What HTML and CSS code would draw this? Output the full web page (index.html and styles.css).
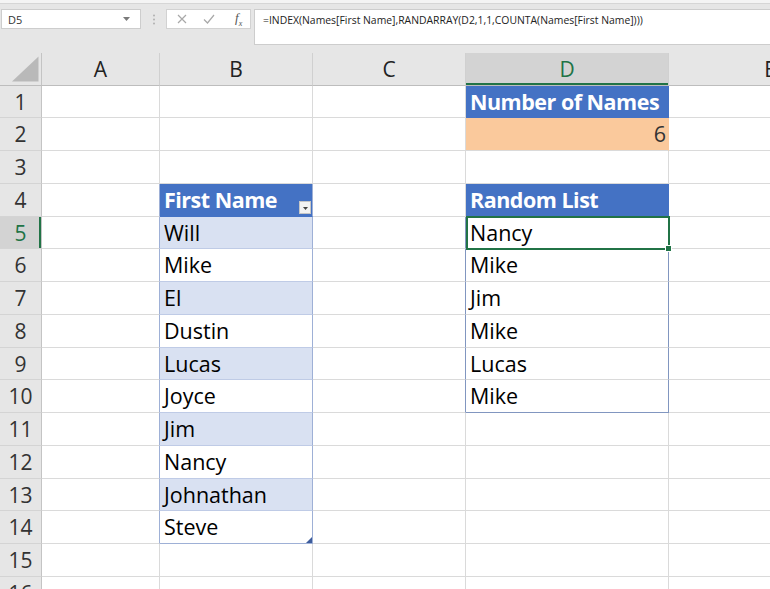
FILE: index.html
```html
<!DOCTYPE html>
<html>
<head>
<meta charset="utf-8">
<link rel="stylesheet" href="styles.css">
</head>
<body>
<div class="topbar">
  <div class="namebox"><span>D5</span><svg width="7" height="4" viewBox="0 0 7 4"><path d="M0 0H7L3.5 4Z" fill="#7a7a7a"/></svg></div>
  <div class="dots"><svg width="4" height="11" viewBox="0 0 4 11"><circle cx="2" cy="1.5" r="1" fill="#b0b0b0"/><circle cx="2" cy="5.5" r="1" fill="#b0b0b0"/><circle cx="2" cy="9.5" r="1" fill="#b0b0b0"/></svg></div>
  <div class="fbtns">
    <svg class="ico" width="10" height="10" viewBox="0 0 10 10"><path d="M1 1L9 9M9 1L1 9" stroke="#a8a8a8" stroke-width="1.2" fill="none"/></svg>
    <svg class="ico" width="12" height="10" viewBox="0 0 12 10"><path d="M1 5.5L4.5 9L11 1" stroke="#a8a8a8" stroke-width="1.2" fill="none"/></svg>
    <span class="fx"><i>f</i><sub>x</sub></span>
  </div>
  <div class="formula">=INDEX(Names[First Name],RANDARRAY(D2,1,1,COUNTA(Names[First Name])))</div>
</div>
<div class="sheet">
  <div class="corner"><svg width="41" height="32" viewBox="0 0 41 32"><path d="M12 28.5H38.5V3.5Z" fill="#b9b9b9"/></svg></div>
  <div class="h">A</div><div class="h">B</div><div class="h">C</div><div class="h hsel">D</div><div class="h">E</div>

  <div class="rh">1</div><div class="c"></div><div class="c"></div><div class="c"></div><div class="c blue">Number of Names</div><div class="c"></div>
  <div class="rh">2</div><div class="c"></div><div class="c"></div><div class="c"></div><div class="c orange">6</div><div class="c"></div>
  <div class="rh">3</div><div class="c"></div><div class="c"></div><div class="c"></div><div class="c"></div><div class="c"></div>
  <div class="rh">4</div><div class="c tl"></div><div class="c blue tb">First Name<span class="filter"><svg width="5" height="3" viewBox="0 0 5 3"><path d="M0 0H5L2.5 3Z" fill="#444"/></svg></span></div><div class="c"></div><div class="c blue">Random List</div><div class="c"></div>
  <div class="rh rsel">5</div><div class="c tl"></div><div class="c tb band">Will</div><div class="c sl"></div><div class="c sp active">Nancy<span class="handle"></span></div><div class="c"></div>
  <div class="rh">6</div><div class="c tl"></div><div class="c tb">Mike</div><div class="c sl"></div><div class="c sp">Mike</div><div class="c"></div>
  <div class="rh">7</div><div class="c tl"></div><div class="c tb band">El</div><div class="c sl"></div><div class="c sp">Jim</div><div class="c"></div>
  <div class="rh">8</div><div class="c tl"></div><div class="c tb">Dustin</div><div class="c sl"></div><div class="c sp">Mike</div><div class="c"></div>
  <div class="rh">9</div><div class="c tl"></div><div class="c tb band">Lucas</div><div class="c sl"></div><div class="c sp">Lucas</div><div class="c"></div>
  <div class="rh">10</div><div class="c tl"></div><div class="c tb">Joyce</div><div class="c sl"></div><div class="c sp spb">Mike</div><div class="c"></div>
  <div class="rh">11</div><div class="c tl"></div><div class="c tb band">Jim</div><div class="c"></div><div class="c"></div><div class="c"></div>
  <div class="rh">12</div><div class="c tl"></div><div class="c tb">Nancy</div><div class="c"></div><div class="c"></div><div class="c"></div>
  <div class="rh">13</div><div class="c tl"></div><div class="c tb band">Johnathan</div><div class="c"></div><div class="c"></div><div class="c"></div>
  <div class="rh">14</div><div class="c tl"></div><div class="c tb tbl">Steve<svg class="resize" width="6" height="6" viewBox="0 0 6 6"><path d="M6 0V6H0Z" fill="#3d5c9c"/></svg></div><div class="c"></div><div class="c"></div><div class="c"></div>
  <div class="rh">15</div><div class="c"></div><div class="c"></div><div class="c"></div><div class="c"></div><div class="c"></div>
  <div class="rh">16</div><div class="c"></div><div class="c"></div><div class="c"></div><div class="c"></div><div class="c"></div>
</div>
</body>
</html>
```
FILE: styles.css
```css
html, body {
  margin: 0;
  padding: 0;
}
body {
  width: 770px;
  height: 589px;
  overflow: hidden;
  background: #ffffff;
  font-family: "Open Sans", "Noto Sans", sans-serif;
}
.topbar {
  height: 53px;
  box-sizing: border-box;
  background: linear-gradient(#f4f4f4 0 3px, #d6d6d6 3px 4px, #e6e6e6 4px);
  display: flex;
  align-items: flex-start;
  padding-top: 9px;
  padding-left: 1px;
}
.namebox {
  width: 140px;
  height: 20px;
  box-sizing: border-box;
  background: #fff;
  border: 1px solid #cdcdcd;
  display: flex;
  align-items: center;
  justify-content: space-between;
  padding: 0 10px 0 6px;
  font-size: 11px;
  color: #333;
}
.dots {
  width: 25px;
  height: 20px;
  display: flex;
  align-items: center;
  justify-content: center;
}
.fbtns {
  width: 85px;
  height: 20px;
  box-sizing: border-box;
  background: #fff;
  border: 1px solid #d2d2d2;
  display: flex;
  align-items: center;
  padding-left: 10px;
  gap: 16px;
}
.fx {
  font-family: "Liberation Serif", serif;
  font-size: 13px;
  color: #555;
  margin-left: 4px;
}
.fx sub {
  font-size: 8px;
  font-style: italic;
}
.formula {
  margin-left: 3px;
  flex: 1;
  height: 36px;
  box-sizing: border-box;
  background: #fff;
  border: 1px solid #cdcdcd;
  border-right: none;
  padding: 3px 0 0 8px;
  font-size: 10.4px;
  color: #222;
  white-space: nowrap;
}
.sheet {
  display: grid;
  grid-template-columns: 42px 118px 153px 153px 203px 203px;
  grid-template-rows: 32.5px;
  grid-auto-rows: 32.75px;
}
.corner {
  background: #e6e6e6;
  border-right: 1px solid #c4c4c4;
  border-bottom: 1px solid #bdbdbd;
  box-sizing: border-box;
  overflow: hidden;
}
.corner svg {
  display: block;
}
.h {
  background: #e6e6e6;
  border-right: 1px solid #d0d0d0;
  border-bottom: 1px solid #bdbdbd;
  box-sizing: border-box;
  text-align: center;
  font-size: 21px;
  line-height: 29px;
  padding-top: 2px;
  color: #222;
}
.h.hsel {
  background: #d3d3d3;
  color: #217346;
  box-shadow: inset 0 -2px 0 #217346;
}
.rh {
  background: #e6e6e6;
  border-right: 1px solid #c4c4c4;
  border-bottom: 1px solid #d4d4d4;
  box-sizing: border-box;
  text-align: center;
  font-size: 21px;
  line-height: 31px;
  padding-top: 1px;
  color: #333;
}
.rh.rsel {
  background: #d3d3d3;
  color: #217346;
  box-shadow: inset -2px 0 0 #217346;
}
.c {
  position: relative;
  border-right: 1px solid #dadada;
  border-bottom: 1px solid #dadada;
  box-sizing: border-box;
  font-size: 21.5px;
  line-height: 30.75px;
  padding: 1px 2px 0 4px;
  color: #000;
  white-space: nowrap;
}
.blue {
  background: #4472c4;
  color: #fff;
  font-weight: 700;
  letter-spacing: -0.5px;
  border-right-color: #4472c4;
  border-bottom-color: #4472c4;
}
.orange {
  background: #fac99c;
  border-right-color: #fac99c;
  text-align: right;
  color: #333;
}
.tl {
  border-right-color: #9eb0d6;
}
.tb {
  border-right-color: #9eb0d6;
  border-bottom-color: #bfcbe6;
}
.tb.blue {
  border-right-color: #9eb0d6;
  border-bottom-color: #4472c4;
}
.tb.tbl {
  border-bottom-color: #9eb0d6;
}
.band {
  background: #d9e1f2;
}
.sl {
  border-right-color: #8196c0;
}
.sp {
  border-right-color: #8196c0;
}
.sp.spb {
  border-bottom-color: #8196c0;
}
.active::after {
  content: "";
  position: absolute;
  top: -1px;
  left: 0;
  right: -2px;
  bottom: -2px;
  border: 2px solid #217346;
}
.handle {
  position: absolute;
  right: -4px;
  bottom: -4px;
  width: 5px;
  height: 5px;
  background: #217346;
  border: 1px solid #fff;
  z-index: 2;
}
.filter {
  position: absolute;
  right: 1px;
  bottom: 2px;
  width: 12px;
  height: 13px;
  box-sizing: border-box;
  background: #f3f3f3;
  border: 1px solid #c6c6c6;
  display: flex;
  align-items: center;
  justify-content: center;
  padding-top: 2px;
}
.filter svg {
  display: block;
}
.resize {
  position: absolute;
  right: 0;
  bottom: 0;
  display: block;
}
```
